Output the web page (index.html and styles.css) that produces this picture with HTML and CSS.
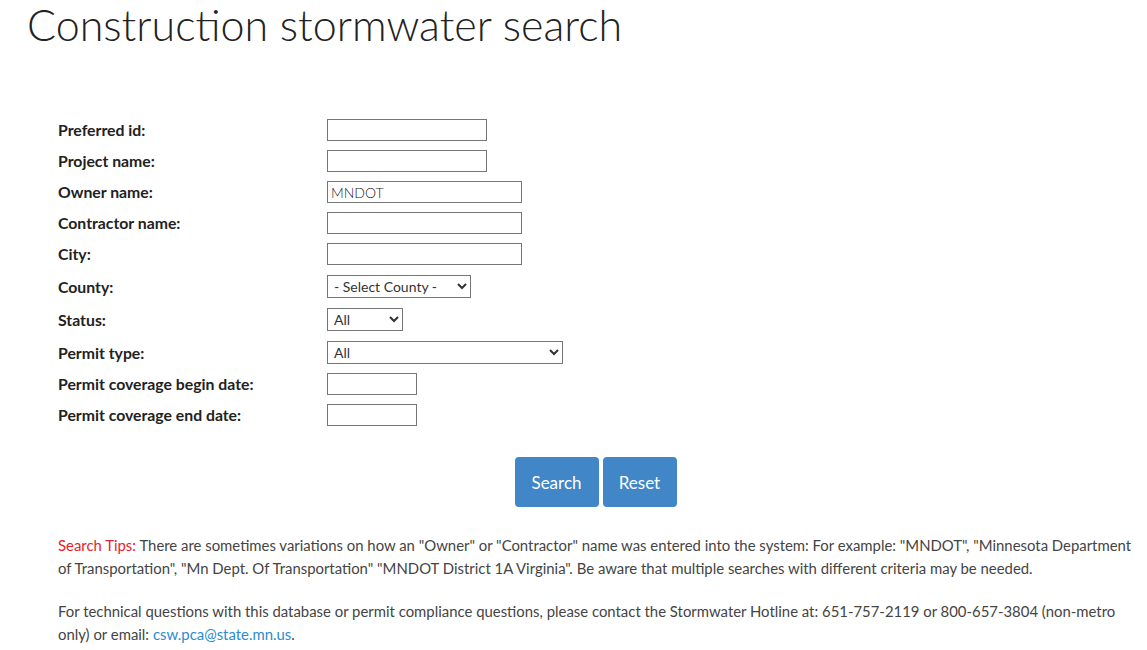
FILE: index.html
```html
<!DOCTYPE html>
<html lang="en">
<head>
<meta charset="utf-8">
<title>Construction stormwater search</title>
<link rel="stylesheet" href="styles.css">
</head>
<body>
<h1 class="page-title">Construction stormwater search</h1>
<div class="content">
  <form class="search-form">
    <div class="fields">
      <label class="field-label" for="pid">Preferred id:</label>
      <div class="field"><input id="pid" class="txt txt-short" type="text"></div>

      <label class="field-label" for="pname">Project name:</label>
      <div class="field"><input id="pname" class="txt txt-short" type="text"></div>

      <label class="field-label" for="owner">Owner name:</label>
      <div class="field"><input id="owner" class="txt txt-long" type="text" value="MNDOT"></div>

      <label class="field-label" for="contractor">Contractor name:</label>
      <div class="field"><input id="contractor" class="txt txt-long" type="text"></div>

      <label class="field-label" for="city">City:</label>
      <div class="field"><input id="city" class="txt txt-long" type="text"></div>

      <label class="field-label sel-row" for="county">County:</label>
      <div class="field sel-row"><select id="county" class="sel sel-county"><option>- Select County -</option></select></div>

      <label class="field-label sel-row" for="status">Status:</label>
      <div class="field sel-row"><select id="status" class="sel sel-status"><option>All</option></select></div>

      <label class="field-label sel-row" for="ptype">Permit type:</label>
      <div class="field sel-row"><select id="ptype" class="sel sel-type"><option>All</option></select></div>

      <label class="field-label" for="begin">Permit coverage begin date:</label>
      <div class="field"><input id="begin" class="txt txt-date" type="text"></div>

      <label class="field-label" for="end">Permit coverage end date:</label>
      <div class="field"><input id="end" class="txt txt-date" type="text"></div>
    </div>
    <div class="actions">
      <button type="button" class="btn">Search</button>
      <button type="button" class="btn btn-reset">Reset</button>
    </div>
  </form>
  <p class="note"><span class="tips">Search Tips:</span> There are sometimes variations on how an "Owner" or "Contractor" name was entered into the system: For example: "MNDOT", "Minnesota Department of Transportation", "Mn Dept. Of Transportation" "MNDOT District 1A Virginia". Be aware that multiple searches with different criteria may be needed.</p>
  <p class="note">For technical questions with this database or permit compliance questions, please contact the Stormwater Hotline at: 651-757-2119 or 800-657-3804 (non-metro only) or email: <a class="mail" href="#">csw.pca@state.mn.us</a>.</p>
</div>
</body>
</html>
```

FILE: styles.css
```css
html, body {
  margin: 0;
  padding: 0;
  background: #fff;
}
body {
  font-family: Lato, "Open Sans", "Liberation Sans", sans-serif;
  color: #333;
}
.page-title {
  margin: 0;
  padding: 0 0 0 27px;
  font-family: Lato, "Open Sans", sans-serif;
  font-weight: 300;
  font-size: 43px;
  line-height: 50px;
  color: #222;
}
.content {
  width: 1075px;
  margin-left: 58px;
  padding-top: 69px;
}
.fields {
  display: grid;
  grid-template-columns: 269px auto;
  row-gap: 9px;
  align-items: center;
}
.field-label {
  font-weight: 700;
  font-size: 15.8px;
  line-height: 20px;
  margin-top: -1px;
  color: #222;
}
.field { display: flex; align-items: center; }
.sel-row { margin: 1px 0 0; }
.txt {
  box-sizing: border-box;
  height: 22px;
  margin: 0;
  border: 1px solid #767676;
  border-radius: 0;
  padding: 0 3px;
  font-family: Lato, "Open Sans", sans-serif;
  font-weight: 300;
  font-size: 14px;
  color: #222;
  background: #fff;
}
.txt-short { width: 160px; }
.txt-long { width: 195px; }
.txt-date { width: 90px; }
.sel {
  box-sizing: border-box;
  height: 23px;
  margin: 0;
  border: 1px solid #767676;
  border-radius: 0;
  padding: 0 2px;
  font-family: Lato, "Open Sans", sans-serif;
  font-weight: 400;
  font-size: 14px;
  color: #333;
  background: #fff;
}
.sel-county { width: 144px; }
.sel-status { width: 76px; }
.sel-type { width: 236px; }
.actions {
  margin-top: 31px;
  display: flex;
  justify-content: center;
  gap: 4px;
}
.btn {
  height: 50px;
  width: 84px;
  border: 0;
  border-radius: 4px;
  background: #4186c7;
  color: #fff;
  font-family: Lato, "Open Sans", sans-serif;
  font-size: 17px;
  margin: 0;
  padding: 0;
}
.btn-reset { width: 74px; }
.note {
  margin: 27px 0 0;
  font-size: 14.9px;
  line-height: 23px;
  color: #444;
}
.note + .note { margin-top: 20px; }
.tips { color: #e8202a; }
.mail { color: #2b8ad0; text-decoration: none; }
```
